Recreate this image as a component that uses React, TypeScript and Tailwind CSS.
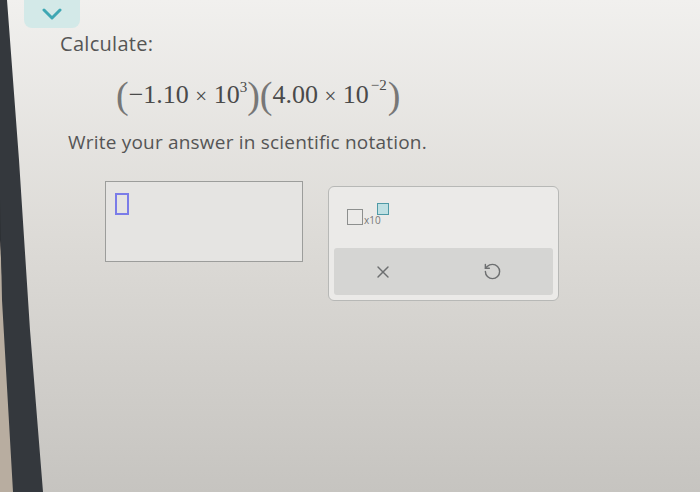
import React from 'react';
import { X, RotateCcw } from 'lucide-react';

const sans = { fontFamily: '"Open Sans", "Noto Sans", sans-serif' };
const serif = { fontFamily: '"Liberation Serif", "DejaVu Serif", serif' };

const Bezel: React.FC = () => (
  <svg
    className="absolute left-0 top-0 h-[492px] w-[50px] pointer-events-none"
    viewBox="0 0 50 492"
    preserveAspectRatio="none"
  >
    <polygon points="0,0 3,0 3,492 0,492" fill="#2c2f33" />
    <polygon points="0,240 14,492 0,492" fill="#b8ada0" />
    <polygon points="0,0 7,0 19,160 30,330 43,492 13,492 2,300 0,200" fill="#34383d" />
  </svg>
);

const Expression: React.FC = () => (
  <div className="flex items-center text-[#4a4a4a]" style={serif}>
    <span className="text-[38px] font-light leading-none text-[#777]">(</span>
    <span className="text-[26px] leading-none">
      −1.10 <span className="text-[21px]">×</span> 10
    </span>
    <span className="text-[15px] leading-none -mt-[15px]">3</span>
    <span className="text-[38px] font-light leading-none text-[#777]">)</span>
    <span className="text-[38px] font-light leading-none text-[#777]">(</span>
    <span className="text-[26px] leading-none">
      4.00 <span className="text-[21px]">×</span> 10
    </span>
    <span className="text-[15px] leading-none -mt-[20px] ml-[2px]">−2</span>
    <span className="text-[38px] font-light leading-none text-[#777] ml-[1px]">)</span>
  </div>
);

const Keypad: React.FC = () => (
  <div className="w-[231px] h-[115px] mt-[5px] rounded-[6px] border-[1.5px] border-[#b7b8b6] bg-[#ebeae8] flex flex-col p-[5px]">
    <div className="flex items-end h-[56px] pl-[13px] pb-[23px]">
      <div className="w-[16px] h-[16px] border-[1.5px] border-[#8d8f8e]" />
      <span className="text-[10px] leading-none text-[#777] ml-[1px]" style={sans}>x10</span>
      <div className="w-[12px] h-[12px] border-[1.5px] border-[#4f9aa6] bg-[#bfe0e3] mb-[10px] -ml-[4px]" />
    </div>
    <div className="flex-1 rounded-[3px] bg-[#d5d5d3] flex items-center pl-[39px] gap-[90px]">
      <X className="w-[20px] h-[20px] text-[#6d6f70]" strokeWidth={1.7} />
      <RotateCcw className="w-[19px] h-[19px] text-[#6d6f70]" strokeWidth={1.8} />
    </div>
  </div>
);

export default function App() {
  return (
    <div className="relative w-[700px] h-[492px] overflow-hidden bg-gradient-to-b from-[#f1f0ee] via-[#dcdad6] to-[#c6c4c0]">
      <div className="flex flex-col">
        <div className="ml-[24px] w-[56px] h-[28px] rounded-b-[8px] bg-[#d3e9e8] flex items-center justify-center">
          <svg width="20" height="12" viewBox="0 0 20 12">
            <polyline points="2,2 10,10 18,2" fill="none" stroke="#3ea7b3" strokeWidth="3" strokeLinecap="round" strokeLinejoin="round" />
          </svg>
        </div>
        <div className="ml-[60px] mt-[3px] text-[20px] leading-[26px] tracking-[0.3px] text-[#555]" style={sans}>
          Calculate:
        </div>
        <div className="ml-[116px] mt-[19px]">
          <Expression />
        </div>
        <div className="ml-[68px] mt-[15px] text-[19px] leading-[26px] tracking-[0.2px] text-[#555]" style={sans}>
          Write your answer in scientific notation.
        </div>
        <div className="flex items-start mt-[26px] ml-[105px] gap-[25px]">
          <div className="w-[198px] h-[81px] border-[1.5px] border-[#9c9d9b] bg-[#e5e4e2] pl-[9px] pt-[11px]">
            <div className="w-[14px] h-[22px] border-2 border-[#7a7ce8]" />
          </div>
          <Keypad />
        </div>
      </div>
      <Bezel />
    </div>
  );
}
